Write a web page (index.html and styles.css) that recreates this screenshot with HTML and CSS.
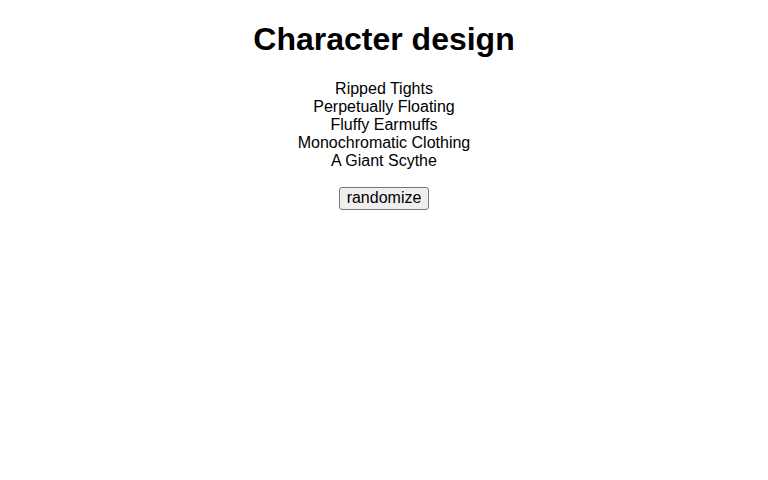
FILE: index.html
```html
<!DOCTYPE html>
<html lang="en">
<head>
<meta charset="utf-8">
<title>Character design</title>
<link rel="stylesheet" href="styles.css">
</head>
<body>
  <main class="generator">
    <h1 class="generator-title">Character design</h1>
    <ul class="trait-list">
      <li>Ripped Tights</li>
      <li>Perpetually Floating</li>
      <li>Fluffy Earmuffs</li>
      <li>Monochromatic Clothing</li>
      <li>A Giant Scythe</li>
    </ul>
    <div class="actions">
      <button class="randomize-btn" type="button">randomize</button>
    </div>
  </main>
</body>
</html>
```
FILE: styles.css
```css
body {
  margin: 0 8px 8px;
  background: #ffffff;
  color: #000000;
  font-family: "Liberation Sans", Arial, sans-serif;
  font-size: 16px;
}

.generator {
  text-align: center;
}

.generator-title {
  font-size: 32px;
  font-weight: bold;
  margin: 21.44px 0;
}

.trait-list {
  list-style: none;
  margin: 0;
  padding: 0;
  line-height: 18px;
}

.actions {
  display: flex;
  justify-content: center;
  margin: 17px 0 16px;
}

.randomize-btn {
  font-family: "Liberation Sans", Arial, sans-serif;
  font-size: 16px;
  line-height: 18px;
  color: #000000;
  background: #efefef;
  border: 1px solid #767676;
  border-radius: 3px;
  padding: 1px 7px 2px;
}
```
